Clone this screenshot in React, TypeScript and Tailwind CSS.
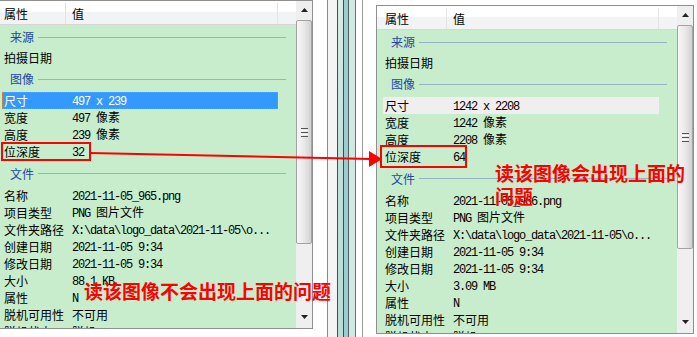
type Row =
  | { kind: "group"; label: string; h: string }
  | { kind: "item"; label: string; value: string; sel?: "blue" | "gray" };

const mono = "font-['Liberation_Mono',monospace] text-[12px] tracking-[-1.2px]";

const leftRows: Row[] = [
  { kind: "group", label: "来源", h: "h-[24px]" },
  { kind: "item", label: "拍摄日期", value: "" },
  { kind: "group", label: "图像", h: "h-[26px]" },
  { kind: "item", label: "尺寸", value: "497 x 239", sel: "blue" },
  { kind: "item", label: "宽度", value: "497 像素" },
  { kind: "item", label: "高度", value: "239 像素" },
  { kind: "item", label: "位深度", value: "32" },
  { kind: "group", label: "文件", h: "h-[27px]" },
  { kind: "item", label: "名称", value: "2021-11-05_965.png" },
  { kind: "item", label: "项目类型", value: "PNG 图片文件" },
  { kind: "item", label: "文件夹路径", value: "X:\\data\\logo_data\\2021-11-05\\o..." },
  { kind: "item", label: "创建日期", value: "2021-11-05 9:34" },
  { kind: "item", label: "修改日期", value: "2021-11-05 9:34" },
  { kind: "item", label: "大小", value: "88.1 KB" },
  { kind: "item", label: "属性", value: "N" },
  { kind: "item", label: "脱机可用性", value: "不可用" },
  { kind: "item", label: "脱机状态", value: "脱机" },
];

const rightRows: Row[] = [
  { kind: "group", label: "来源", h: "h-[24px]" },
  { kind: "item", label: "拍摄日期", value: "" },
  { kind: "group", label: "图像", h: "h-[26px]" },
  { kind: "item", label: "尺寸", value: "1242 x 2208", sel: "gray" },
  { kind: "item", label: "宽度", value: "1242 像素" },
  { kind: "item", label: "高度", value: "2208 像素" },
  { kind: "item", label: "位深度", value: "64" },
  { kind: "group", label: "文件", h: "h-[27px]" },
  { kind: "item", label: "名称", value: "2021-11-05_966.png" },
  { kind: "item", label: "项目类型", value: "PNG 图片文件" },
  { kind: "item", label: "文件夹路径", value: "X:\\data\\logo_data\\2021-11-05\\o..." },
  { kind: "item", label: "创建日期", value: "2021-11-05 9:34" },
  { kind: "item", label: "修改日期", value: "2021-11-05 9:34" },
  { kind: "item", label: "大小", value: "3.09 MB" },
  { kind: "item", label: "属性", value: "N" },
  { kind: "item", label: "脱机可用性", value: "不可用" },
  { kind: "item", label: "脱机状态", value: "脱机" },
];

// ASCII runs get the narrow mono face, CJK stays in the sans face
function Mixed({ text }: { text: string }) {
  const parts = text.match(/[\x20-\x7e]+|[^\x20-\x7e]+/g) ?? [];
  return (
    <>
      {parts.map((p, i) =>
        /^[\x20-\x7e]/.test(p) ? (
          <span key={i} className={mono}>
            {p}
          </span>
        ) : (
          <span key={i}>{p}</span>
        ),
      )}
    </>
  );
}

function Scrollbar() {
  return (
    <div className="flex w-[16px] shrink-0 flex-col bg-[#efefef]">
      <div className="flex h-[18px] items-center justify-center">
        <svg width="7" height="4" viewBox="0 0 7 4">
          <path d="M3.5 0L7 4H0z" fill="#222" />
        </svg>
      </div>
      <div className="mt-[1px] flex h-[224px] items-center justify-center rounded-[2px] border border-[#a3a3a3] bg-linear-to-r from-[#f6f6f6] via-[#e9e9e9] to-[#d2d2d2]">
        <div className="flex w-[7px] flex-col gap-[1px]">
          <div className="h-[1px] bg-[#555]" />
          <div className="h-[1px] bg-[#fff]" />
          <div className="h-[1px] bg-[#555]" />
          <div className="h-[1px] bg-[#fff]" />
          <div className="h-[1px] bg-[#555]" />
        </div>
      </div>
      <div className="flex-1" />
      <div className="mb-[2px] flex h-[18px] items-center justify-center">
        <svg width="7" height="4" viewBox="0 0 7 4">
          <path d="M0 0H7L3.5 4z" fill="#222" />
        </svg>
      </div>
    </div>
  );
}

function Panel({ rows, className }: { rows: Row[]; className: string }) {
  return (
    <div className={`flex h-[329px] w-[318px] shrink-0 border border-[#8f8f8f] bg-white ${className}`}>
      <div className="flex w-[300px] flex-col overflow-hidden">
        {/* column header */}
        <div className="flex h-[24px] shrink-0 border-b border-[#d6d6d6] bg-[linear-gradient(#ffffff_0%,#ffffff_45%,#f2f3f5_50%,#f2f3f5_100%)] pt-[2px] text-[12px] leading-none text-black">
          <div className="flex w-[70px] items-center border-r border-[#e3e3e3] pl-[8px]">属性</div>
          <div className="flex w-[212px] items-center border-r border-[#e3e3e3] pl-[6px]">值</div>
        </div>
        {/* rows */}
        <div className="flex-1 overflow-hidden bg-[#c7edcc] pl-[6px] text-[12px] text-black">
          {rows.map((r, i) =>
            r.kind === "group" ? (
              <div key={i} className={`flex w-[284px] items-center pl-[8px] leading-none text-[#2347a8] ${r.h}`}>
                <span>{r.label}</span>
                <div className="ml-[4px] h-[1px] flex-1 bg-[#97b3c4]" />
              </div>
            ) : (
              <div
                key={i}
                className={`flex h-[17px] w-[276px] items-center leading-none ${
                  r.sel === "blue"
                    ? "bg-[#3399ff] text-white outline-1 -outline-offset-1 outline-dotted outline-[#d08a3a]"
                    : r.sel === "gray"
                      ? "bg-[#efefef]"
                      : ""
                }`}
              >
                <div className="w-[70px] shrink-0 pl-[2px]">{r.label}</div>
                <div className="whitespace-pre">
                  <Mixed text={r.value} />
                </div>
              </div>
            ),
          )}
        </div>
      </div>
      <Scrollbar />
    </div>
  );
}

function Splitter() {
  return (
    <div className="flex h-[337px] w-[63px] shrink-0">
      <div className="w-[14px] bg-white" />
      <div className="w-[1px] bg-[#8a8a8a]" />
      <div className="w-[9px] bg-[#f4f4f4]" />
      <div className="w-[1px] bg-[#4a4a4a]" />
      <div className="w-[5px] bg-linear-to-b from-[#d9ece9] via-[#bfe0dc] to-[#b8dcd6]" />
      <div className="w-[1px] bg-[#3d4b4b]" />
      <div className="w-[4px] bg-[#9ccccb]" />
      <div className="w-[1px] bg-[#506060]" />
      <div className="w-[6px] bg-[#cfe8e2]" />
      <div className="w-[1px] bg-[#707070]" />
      <div className="w-[6px] bg-white" />
      <div className="w-[1px] bg-[#9a9a9a]" />
      <div className="w-[13px] bg-white" />
    </div>
  );
}

export default function App() {
  return (
    <div className="relative flex h-[337px] w-[697px] items-start overflow-hidden bg-white font-['Noto_Sans_CJK_SC',sans-serif]">
      <Panel rows={leftRows} className="-ml-[5px]" />
      <Splitter />
      <Panel rows={rightRows} className="mt-[5px]" />

      {/* annotations */}
      <div className="absolute left-[1px] top-[142px] h-[19px] w-[90px] border-2 border-[#ff0000]" />
      <div className="absolute left-[380px] top-[145px] h-[23px] w-[87px] border-2 border-[#ff0000]" />
      <svg className="pointer-events-none absolute left-0 top-0" width="697" height="337" viewBox="0 0 697 337">
        <line x1="90" y1="153" x2="371" y2="159" stroke="#ff0000" strokeWidth="2" />
        <path d="M369 151L382 159L369 167z" fill="#ff0000" />
      </svg>
      <div className="absolute left-[84px] top-[281px] whitespace-nowrap text-[19px] font-bold leading-[19px] text-[#ff0000]">
        读该图像不会出现上面的问题
      </div>
      <div className="absolute left-[495px] top-[161px] w-[192px] text-[19px] font-bold leading-[23px] text-[#ff0000]">
        读该图像会出现上面的问题
      </div>
    </div>
  );
}
